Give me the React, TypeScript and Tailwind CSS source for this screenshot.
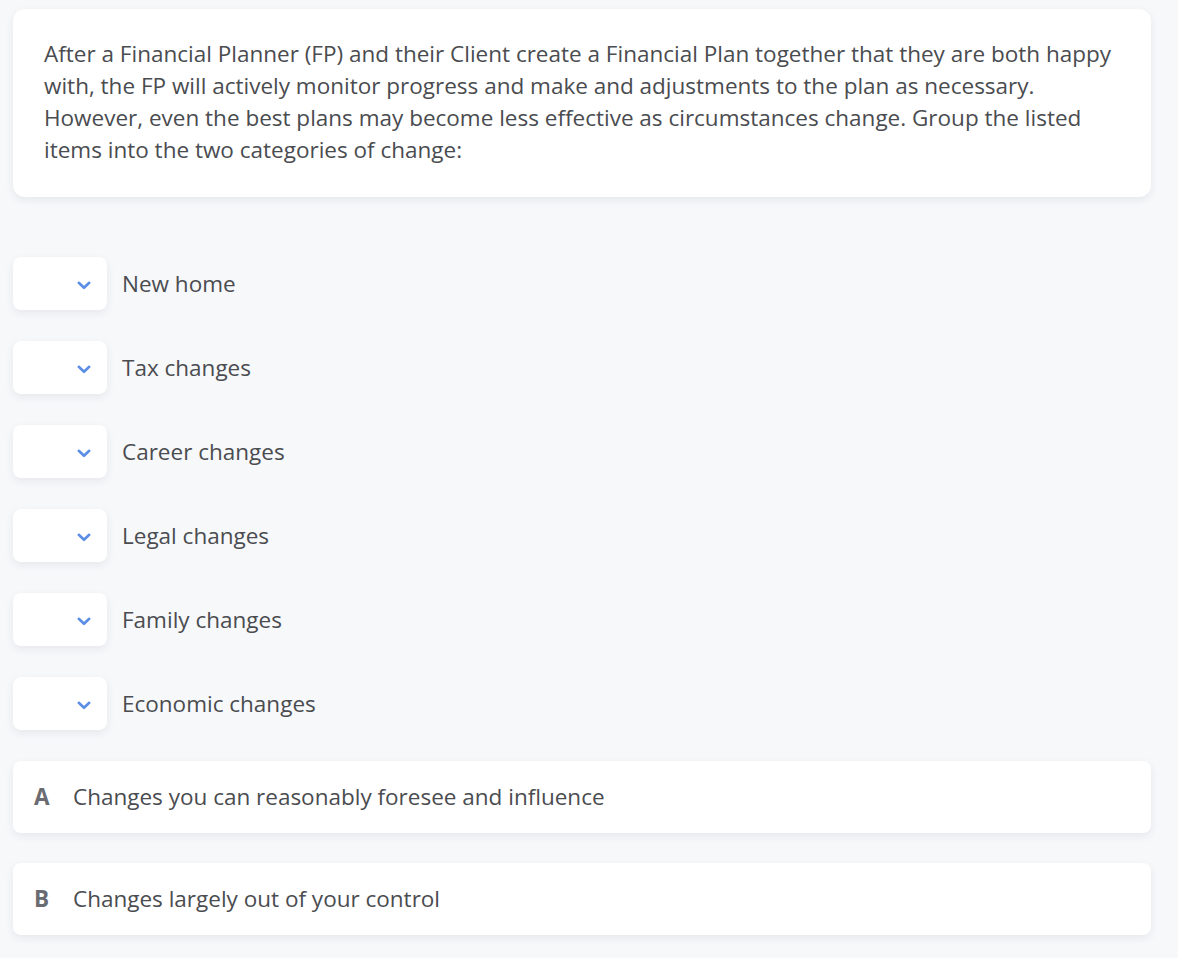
const items = [
  'New home',
  'Tax changes',
  'Career changes',
  'Legal changes',
  'Family changes',
  'Economic changes',
];

const categories = [
  { key: 'A', label: 'Changes you can reasonably foresee and influence' },
  { key: 'B', label: 'Changes largely out of your control' },
];

function Chevron() {
  return (
    <svg width="14" height="9" viewBox="0 0 14 9" fill="none">
      <path d="M1.8 1.8 L7 6.8 L12.2 1.8" stroke="#5b8ee6" strokeWidth="2.6" strokeLinecap="round" strokeLinejoin="round" />
    </svg>
  );
}

export default function App() {
  return (
    <div className="min-h-screen bg-[#f7f8fa] px-[13px] pt-[9px] pb-[22px] text-[#4a4c50] font-['Open_Sans',sans-serif] text-[22.5px]">
      {/* question */}
      <div className="w-[1138px] rounded-xl bg-white px-[31px] pt-[29px] pb-[31px] leading-[32px] shadow-[0_3px_8px_rgba(30,40,60,0.08)]">
        After a Financial Planner (FP) and their Client create a Financial Plan together that they are both happy with, the FP will actively monitor progress and make and adjustments to the plan as necessary. However, even the best plans may become less effective as circumstances change. Group the listed items into the two categories of change:
      </div>

      {/* items with dropdowns */}
      <div className="mt-[60px] flex flex-col gap-[31px]">
        {items.map((item) => (
          <div key={item} className="flex items-center gap-[15px]">
            <div className="flex h-[53px] w-[94px] items-center justify-end rounded-lg bg-white pr-[16px] pt-[4px] shadow-[0_3px_8px_rgba(30,40,60,0.08)]">
              <Chevron />
            </div>
            <span className="leading-[30px]">{item}</span>
          </div>
        ))}
      </div>

      {/* categories */}
      <div className="mt-[31px] flex w-[1138px] flex-col gap-[30px]">
        {categories.map((c) => (
          <div key={c.key} className="flex h-[72px] items-center rounded-lg bg-white pl-[21px] shadow-[0_3px_8px_rgba(30,40,60,0.08)]">
            <span className="w-[39px] font-bold text-[#6a6c71]">{c.key}</span>
            <span>{c.label}</span>
          </div>
        ))}
      </div>
    </div>
  );
}
